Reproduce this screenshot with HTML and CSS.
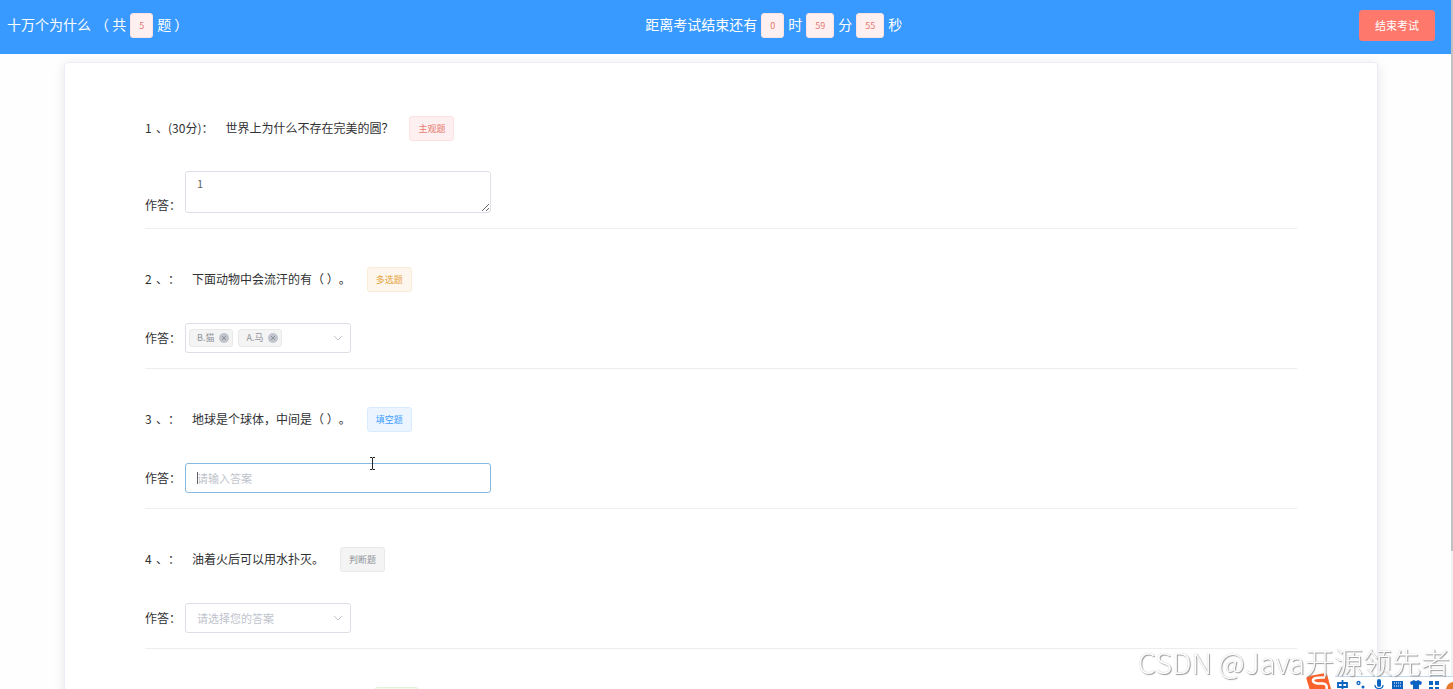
FILE: index.html
```html
<!DOCTYPE html>
<html lang="zh-CN">
<head>
    <meta charset="UTF-8">
    <meta name="viewport" content="width=device-width, initial-scale=1.0">
    <title>十万个为什么</title>
    <link rel="stylesheet" href="styles.css">
</head>
<body>
    <header class="exam-header">
        <div class="header-group">
            <span>十万个为什么</span>
            <span>（ 共</span>
            <span class="tag danger">5</span>
            <span>题 ）</span>
        </div>
        <div class="header-group">
            <span>距离考试结束还有</span>
            <span class="tag danger">0</span>
            <span>时</span>
            <span class="tag danger">59</span>
            <span>分</span>
            <span class="tag danger">55</span>
            <span>秒</span>
        </div>
        <button type="button" class="end-button">结束考试</button>
    </header>

    <main class="paper">
        <section class="question">
            <div class="title">
                <span class="no">1</span><span>、(30分)：</span>
                <span class="text">世界上为什么不存在完美的圆？</span>
                <span class="tag danger">主观题</span>
            </div>
            <div class="answer answer-bottom">
                <label for="answer1">作答：</label>
                <textarea id="answer1" class="field long">1</textarea>
            </div>
        </section>

        <section class="question">
            <div class="title">
                <span class="no">2</span><span>、：</span>
                <span class="text">下面动物中会流汗的有（ ）。</span>
                <span class="tag warning">多选题</span>
            </div>
            <div class="answer">
                <label for="answer2">作答：</label>
                <div class="select-box">
                    <select id="answer2" class="field">
                        <option value=""></option>
                    </select>
                    <div class="chosen">
                        <span class="chip">B.猫
                            <svg viewBox="0 0 10 10"><circle cx="5" cy="5" r="5"/><path d="M3 3l4 4M7 3l-4 4"/></svg>
                        </span>
                        <span class="chip">A.马
                            <svg viewBox="0 0 10 10"><circle cx="5" cy="5" r="5"/><path d="M3 3l4 4M7 3l-4 4"/></svg>
                        </span>
                    </div>
                    <svg class="arrow" viewBox="0 0 10 6"><path d="M1 1l4 4 4-4"/></svg>
                </div>
            </div>
        </section>

        <section class="question">
            <div class="title">
                <span class="no">3</span><span>、：</span>
                <span class="text">地球是个球体，中间是（ ）。</span>
                <span class="tag primary">填空题</span>
            </div>
            <div class="answer">
                <label for="answer3">作答：</label>
                <div class="input-box">
                    <input type="text" id="answer3" class="field long active" placeholder="请输入答案">
                    <span class="caret"></span>
                    <svg class="cursor" viewBox="0 0 7 13"><path d="M1 .5h2l.5.5.5-.5h2M3.500 1v11M1 12.500h2l.5-.5.5.5h2"/></svg>
                </div>
            </div>
        </section>

        <section class="question">
            <div class="title">
                <span class="no">4</span><span>、：</span>
                <span class="text">油着火后可以用水扑灭。</span>
                <span class="tag info">判断题</span>
            </div>
            <div class="answer">
                <label for="answer4">作答：</label>
                <div class="select-box">
                    <select id="answer4" class="field placeholder">
                        <option value="">请选择您的答案</option>
                    </select>
                    <svg class="arrow" viewBox="0 0 10 6"><path d="M1 1l4 4 4-4"/></svg>
                </div>
            </div>
        </section>

        <section class="question">
            <div class="title next">
                <span class="tag success"></span>
            </div>
        </section>
    </main>

    <div class="scrollbar"><div class="thumb"></div></div>

    <div class="ime">
        <svg viewBox="-2 0 147 16">
            <path d="M30 4h115v12H30z" fill="#fff"/>
            <path d="M27 3.500h118" stroke="#c3d9ee" fill="none"/>
            <path d="M-1.500 6q-.5-2.200 1.500-2.700L16 .3q2.500-.4 3.200 1.700L23 16H1.500z" fill="#f9622b"/>
            <path d="M17 4.500q-12-.5-12 3t10 3q4.500 .5 3.500 5.500" stroke="#fff" stroke-width="2.600" fill="none"/>
            <g fill="none" stroke="#0c63c0" stroke-width="1.800">
                <path d="M30 10h9v4h-9zM34.500 7v9"/>
                <circle cx="50.500" cy="10" r="1.500" stroke-width="1.300"/>
                <path d="M67 12q0 3.500 4 3.500t4-3.500" stroke-width="1.200"/>
            </g>
            <g fill="#0c63c0">
                <circle cx="55" cy="14" r="1.500"/>
                <rect x="69" y="6" width="4" height="8" rx="2"/>
                <path d="M84 8h11v8H84z"/>
                <path d="M102 9l4-2q2 2 4 0l4 2-1 3-2-.5V16h-6v-4.500l-2 .5z"/>
                <path d="M121 8h4v4h-4zM127 8h4v4h-4zM121 14h4v2h-4zM127 14h4v2h-4z"/>
            </g>
            <path d="M86 10h7M86 13h7" stroke="#fff" stroke-dasharray="1 1"/>
            <path d="M138 16q1-6 7-7v7z" fill="#e8792b"/>
        </svg>
    </div>
    <div class="watermark">CSDN @Java开源领先者</div>
</body>
</html>
```

FILE: styles.css
```css
* {
    box-sizing: border-box;
}
body {
    margin: 0;
    padding-right: 2px;
    height: 100vh;
    overflow: hidden;
    background: #fefefe;
    color: #303133;
    font-family: "Noto Sans CJK SC", sans-serif;
    font-size: 12px;
    line-height: 16px;
    text-spacing-trim: space-all;
}
button, input, select, textarea {
    font-family: inherit;
}
.exam-header {
    display: flex;
    justify-content: space-between;
    align-items: center;
    height: 54px;
    padding: 0 16px 3px 7px;
    background: #389aff;
    color: #fff;
    font-size: 14px;
}
.header-group {
    display: flex;
    align-items: center;
    gap: 4px;
}
.header-group span:not(.tag) {
    padding-bottom: 4px;
}
.tag {
    height: 25px;
    padding: 0 8px;
    border: 1px solid;
    border-radius: 3px;
    font-size: 9px;
    line-height: 23px;
}
.danger {
    background: #fef0f0;
    border-color: #fde2e2;
    color: #e57a70;
}
.warning {
    background: #fdf6ec;
    border-color: #faecd8;
    color: #e6a23c;
}
.primary {
    background: #ecf5ff;
    border-color: #d9ecff;
    color: #409eff;
}
.info {
    background: #f4f4f5;
    border-color: #e9e9eb;
    color: #909399;
}
.success {
    min-width: 45px;
    background: #f0f9eb;
    border-color: #e1f3d8;
    color: #67c23a;
}
.end-button {
    height: 31px;
    padding: 0 15px 2px;
    border: 1px solid #fb7a72;
    border-radius: 3px;
    background: #ff786c;
    color: #fff;
    font-size: 11px;
}
.paper {
    margin: 8px 73px 0 64px;
    padding: 15px 80px;
    border: 1px solid #ebeef5;
    border-radius: 4px;
    background: #fff;
    box-shadow: 0 2px 12px rgba(0, 0, 0, 0.1);
}
.question {
    padding: 38px 0 15px;
    border-bottom: 1px solid #ebeef0;
}
.title {
    display: flex;
    align-items: center;
    height: 25px;
}
.title span:not(.tag) {
    padding-bottom: 2px;
}
.next {
    padding-left: 229px;
}
.no {
    width: 11px;
}
.text {
    margin: 0 16px 0 12px;
}
.answer {
    display: flex;
    align-items: center;
    margin-top: 31px;
}
.answer-bottom {
    align-items: flex-end;
    margin-top: 30px;
}
.answer label {
    width: 40px;
}
.field {
    display: block;
    width: 166px;
    height: 30px;
    padding: 0 11px;
    border: 1px solid #dcdfe6;
    border-radius: 3px;
    background: #fff;
    color: #606266;
    font-size: 11px;
    outline: none;
    appearance: none;
}
.long {
    width: 306px;
}
textarea.field {
    height: 42px;
    padding: 3px 11px;
    line-height: 16px;
}
.active {
    border-color: #85b9e0;
}
.placeholder,
.field::placeholder {
    color: #c0c4cc;
}
.select-box,
.input-box {
    position: relative;
}
.chosen {
    position: absolute;
    top: 6px;
    left: 4px;
    display: flex;
    gap: 5px;
}
.chip {
    display: flex;
    align-items: center;
    gap: 5px;
    height: 18px;
    padding: 0 3px 0 7px;
    border: 1px solid #e9e9eb;
    border-radius: 3px;
    background: #f4f4f5;
    color: #909399;
    font-size: 9px;
}
.chip svg {
    width: 10px;
    height: 10px;
    fill: #c0c4cc;
}
.chip path {
    stroke: #909399;
}
.arrow {
    position: absolute;
    top: 12px;
    right: 8px;
    width: 10px;
    height: 6px;
    fill: none;
    stroke: #c0c4cc;
}
.caret {
    position: absolute;
    top: 9px;
    left: 12px;
    width: 1px;
    height: 12px;
    background: #606266;
}
.cursor {
    position: absolute;
    top: -6px;
    left: 184px;
    width: 7px;
    height: 13px;
    fill: none;
    stroke: #222;
}
.scrollbar {
    position: fixed;
    top: 0;
    right: 0;
    bottom: 0;
    width: 2px;
    background: #f1f1f1;
}
.thumb {
    height: 80%;
    background: #c1c1c1;
}
.ime {
    position: fixed;
    right: 0;
    bottom: 0;
    width: 147px;
    height: 16px;
}
.ime svg {
    display: block;
}
.watermark {
    position: fixed;
    right: 3px;
    bottom: 8px;
    color: #fff;
    font-size: 29px;
    font-weight: 300;
    line-height: 40px;
    text-shadow: 1px 1px 1px #999, 0 0 1px #bbb;
}
```
